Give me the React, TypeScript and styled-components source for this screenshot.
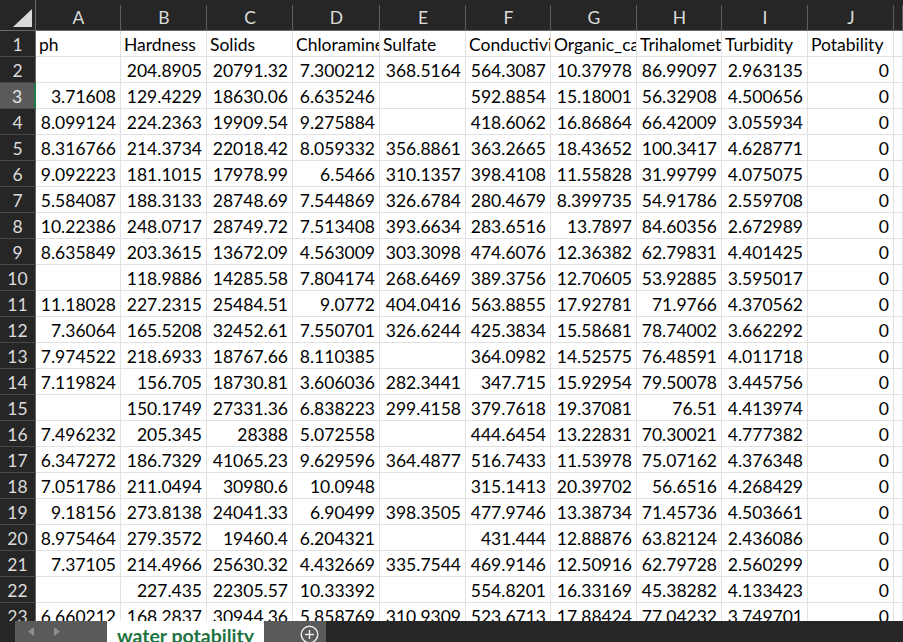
import React from 'react';
import styled, { createGlobalStyle } from 'styled-components';

const GlobalStyle = createGlobalStyle`
  html, body {
    margin: 0;
    padding: 0;
    background: #262626;
  }
  * {
    box-sizing: border-box;
  }
`;

const colWidths = [85, 86, 86, 87, 86, 85, 86, 85, 86, 86];
const letters = ['A', 'B', 'C', 'D', 'E', 'F', 'G', 'H', 'I', 'J'];

const headers = [
  'ph',
  'Hardness',
  'Solids',
  'Chloramines',
  'Sulfate',
  'Conductivity',
  'Organic_carbon',
  'Trihalomethanes',
  'Turbidity',
  'Potability',
];

const rows: string[][] = [
  ['', '204.8905', '20791.32', '7.300212', '368.5164', '564.3087', '10.37978', '86.99097', '2.963135', '0'],
  ['3.71608', '129.4229', '18630.06', '6.635246', '', '592.8854', '15.18001', '56.32908', '4.500656', '0'],
  ['8.099124', '224.2363', '19909.54', '9.275884', '', '418.6062', '16.86864', '66.42009', '3.055934', '0'],
  ['8.316766', '214.3734', '22018.42', '8.059332', '356.8861', '363.2665', '18.43652', '100.3417', '4.628771', '0'],
  ['9.092223', '181.1015', '17978.99', '6.5466', '310.1357', '398.4108', '11.55828', '31.99799', '4.075075', '0'],
  ['5.584087', '188.3133', '28748.69', '7.544869', '326.6784', '280.4679', '8.399735', '54.91786', '2.559708', '0'],
  ['10.22386', '248.0717', '28749.72', '7.513408', '393.6634', '283.6516', '13.7897', '84.60356', '2.672989', '0'],
  ['8.635849', '203.3615', '13672.09', '4.563009', '303.3098', '474.6076', '12.36382', '62.79831', '4.401425', '0'],
  ['', '118.9886', '14285.58', '7.804174', '268.6469', '389.3756', '12.70605', '53.92885', '3.595017', '0'],
  ['11.18028', '227.2315', '25484.51', '9.0772', '404.0416', '563.8855', '17.92781', '71.9766', '4.370562', '0'],
  ['7.36064', '165.5208', '32452.61', '7.550701', '326.6244', '425.3834', '15.58681', '78.74002', '3.662292', '0'],
  ['7.974522', '218.6933', '18767.66', '8.110385', '', '364.0982', '14.52575', '76.48591', '4.011718', '0'],
  ['7.119824', '156.705', '18730.81', '3.606036', '282.3441', '347.715', '15.92954', '79.50078', '3.445756', '0'],
  ['', '150.1749', '27331.36', '6.838223', '299.4158', '379.7618', '19.37081', '76.51', '4.413974', '0'],
  ['7.496232', '205.345', '28388', '5.072558', '', '444.6454', '13.22831', '70.30021', '4.777382', '0'],
  ['6.347272', '186.7329', '41065.23', '9.629596', '364.4877', '516.7433', '11.53978', '75.07162', '4.376348', '0'],
  ['7.051786', '211.0494', '30980.6', '10.0948', '', '315.1413', '20.39702', '56.6516', '4.268429', '0'],
  ['9.18156', '273.8138', '24041.33', '6.90499', '398.3505', '477.9746', '13.38734', '71.45736', '4.503661', '0'],
  ['8.975464', '279.3572', '19460.4', '6.204321', '', '431.444', '12.88876', '63.82124', '2.436086', '0'],
  ['7.37105', '214.4966', '25630.32', '4.432669', '335.7544', '469.9146', '12.50916', '62.79728', '2.560299', '0'],
  ['', '227.435', '22305.57', '10.33392', '', '554.8201', '16.33169', '45.38282', '4.133423', '0'],
  ['6.660212', '168.2837', '30944.36', '5.858769', '310.9309', '523.6713', '17.88424', '77.04232', '3.749701', '0'],
];

const Page = styled.div`
  width: 903px;
  height: 642px;
  display: flex;
  flex-direction: column;
  overflow: hidden;
  background: #ffffff;
  font-family: Lato, 'Open Sans', sans-serif;
`;

const SheetArea = styled.div`
  flex: 1;
  overflow: hidden;
`;

const Grid = styled.div`
  display: grid;
  grid-template-columns: 36px ${colWidths.map((w) => `${w}px`).join(' ')} 1fr;
  grid-auto-rows: 26px;
  grid-template-rows: 31px;
`;

const Corner = styled.div`
  background: #262626;
  border-right: 1px solid #6a6a6a;
  border-bottom: 1px solid #6a6a6a;
  display: flex;
  align-items: flex-end;
  justify-content: flex-end;
  padding: 0 3px 3px 0;
`;

const ColHeader = styled.div`
  background: #262626;
  color: #dcdcdc;
  font-size: 17.5px;
  display: flex;
  align-items: center;
  justify-content: center;
  border-bottom: 1px solid #6a6a6a;
  position: relative;
  padding-top: 4px;

  &::after {
    content: '';
    position: absolute;
    right: 0;
    top: 5px;
    bottom: 0;
    width: 1px;
    background: #5c5c5c;
  }
`;

const RowHeader = styled.div<{ $active?: boolean }>`
  background: ${(p) => (p.$active ? '#5a5a5a' : '#262626')};
  color: ${(p) => (p.$active ? '#e8e8e8' : '#dcdcdc')};
  font-size: 17.5px;
  display: flex;
  align-items: center;
  justify-content: center;
  padding-top: 1px;
  border-bottom: 1px solid #474747;
  border-right: ${(p) => (p.$active ? '2px solid #1f7a45' : '1px solid #6a6a6a')};
`;

const Cell = styled.div<{ $align: 'left' | 'right' }>`
  color: #000000;
  font-size: 17.5px;
  display: flex;
  align-items: center;
  justify-content: ${(p) => (p.$align === 'right' ? 'flex-end' : 'flex-start')};
  padding: 1px 4px 0 3px;
  border-right: 1px solid #e1e1e1;
  border-bottom: 1px solid #e1e1e1;
  white-space: nowrap;
  overflow: hidden;
`;

const TabBar = styled.div`
  height: 21px;
  flex: none;
  display: flex;
  background: #262626;
`;

const TabLead = styled.div`
  width: 15px;
`;

const NavZone = styled.div`
  width: 92px;
  background: #5a5a5a;
  display: flex;
  align-items: center;
  padding-left: 13px;
  gap: 20px;
`;

const ActiveTab = styled.div`
  width: 157px;
  background: #ffffff;
  color: #1d7340;
  font-weight: 700;
  font-size: 19.5px;
  padding: 4px 0 0 10px;
  white-space: nowrap;
  overflow: hidden;
  line-height: 22px;
`;

const AddZone = styled.div`
  width: 62px;
  background: #5a5a5a;
  display: flex;
  align-items: flex-start;
  justify-content: flex-end;
  padding: 4px 7px 0 0;
`;

const Triangle = ({ dir }: { dir: 'left' | 'right' }) => (
  <svg width="6" height="9" viewBox="0 0 6 9">
    {dir === 'left' ? (
      <polygon points="6,0 0,4.5 6,9" fill="#8e8e8e" />
    ) : (
      <polygon points="0,0 6,4.5 0,9" fill="#8e8e8e" />
    )}
  </svg>
);

const PlusCircle = () => (
  <svg width="19" height="19" viewBox="0 0 19 19">
    <circle cx="9.5" cy="9.5" r="8.3" fill="none" stroke="#eeeeee" strokeWidth="1.4" />
    <line x1="9.5" y1="5" x2="9.5" y2="14" stroke="#eeeeee" strokeWidth="1.4" />
    <line x1="5" y1="9.5" x2="14" y2="9.5" stroke="#eeeeee" strokeWidth="1.4" />
  </svg>
);

const isNumber = (v: string) => v !== '' && !isNaN(Number(v));

const App = () => {
  return (
    <>
      <GlobalStyle />
      <Page>
        <SheetArea>
          <Grid>
            <Corner>
              <svg width="19" height="18" viewBox="0 0 19 18">
                <polygon points="19,0 19,18 0,18" fill="#dadada" />
              </svg>
            </Corner>
            {letters.map((l) => (
              <ColHeader key={l}>{l}</ColHeader>
            ))}
            <ColHeader />

            <RowHeader>1</RowHeader>
            {headers.map((h) => (
              <Cell key={h} $align="left">
                {h}
              </Cell>
            ))}
            <Cell $align="left" />

            {rows.map((r, i) => (
              <React.Fragment key={i}>
                <RowHeader $active={i + 2 === 3}>{i + 2}</RowHeader>
                {r.map((v, j) => (
                  <Cell key={j} $align={isNumber(v) ? 'right' : 'left'}>
                    {v}
                  </Cell>
                ))}
                <Cell $align="left" />
              </React.Fragment>
            ))}
          </Grid>
        </SheetArea>
        <TabBar>
          <TabLead />
          <NavZone>
            <Triangle dir="left" />
            <Triangle dir="right" />
          </NavZone>
          <ActiveTab>water potability</ActiveTab>
          <AddZone>
            <PlusCircle />
          </AddZone>
        </TabBar>
      </Page>
    </>
  );
};

export default App;
